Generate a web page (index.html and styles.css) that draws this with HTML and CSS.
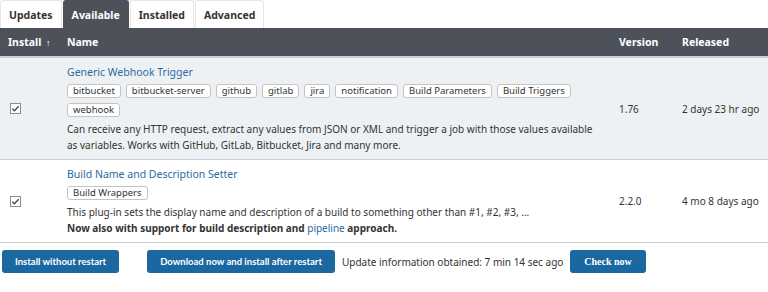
FILE: index.html
```html
<!DOCTYPE html>
<html lang="en">
<head>
    <meta charset="UTF-8">
    <title>Plugin Manager</title>
    <link rel="stylesheet" href="styles.css">
</head>
<body>
    <!-- Tabs -->
    <div class="tabs">
        <div class="tab">Updates</div>
        <div class="tab active">Available</div>
        <div class="tab">Installed</div>
        <div class="tab">Advanced</div>
    </div>

    <!-- Plugin table -->
    <table class="plugins">
        <thead>
            <tr>
                <th class="col-install">Install <span class="arrow">&#8593;</span></th>
                <th class="col-name">Name</th>
                <th class="col-version">Version</th>
                <th class="col-released">Released</th>
            </tr>
        </thead>
        <tbody>
            <tr class="row-alt">
                <td class="col-install">
                    <svg class="check" width="11" height="11" viewBox="0 0 11 11">
                        <rect x="0.5" y="0.5" width="10" height="10" fill="#fff" stroke="#8a8f96"/>
                        <path d="M2.3 5.6 L4.4 7.8 L8.7 3.2" fill="none" stroke="#444" stroke-width="1.3"/>
                    </svg>
                </td>
                <td class="col-name">
                    <a class="title">Generic Webhook Trigger</a>
                    <div class="tags">
                        <span class="tag">bitbucket</span>
                        <span class="tag">bitbucket-server</span>
                        <span class="tag">github</span>
                        <span class="tag">gitlab</span>
                        <span class="tag">jira</span>
                        <span class="tag">notification</span>
                        <span class="tag">Build Parameters</span>
                        <span class="tag">Build Triggers</span>
                        <span class="tag">webhook</span>
                    </div>
                    <div class="desc">Can receive any HTTP request, extract any values from JSON or XML and trigger a job with those values available as variables. Works with GitHub, GitLab, Bitbucket, Jira and many more.</div>
                </td>
                <td class="col-version">1.76</td>
                <td class="col-released">2 days 23 hr ago</td>
            </tr>
            <tr>
                <td class="col-install">
                    <svg class="check" width="11" height="11" viewBox="0 0 11 11">
                        <rect x="0.5" y="0.5" width="10" height="10" fill="#fff" stroke="#8a8f96"/>
                        <path d="M2.3 5.6 L4.4 7.8 L8.7 3.2" fill="none" stroke="#444" stroke-width="1.3"/>
                    </svg>
                </td>
                <td class="col-name">
                    <a class="title">Build Name and Description Setter</a>
                    <div class="tags">
                        <span class="tag">Build Wrappers</span>
                    </div>
                    <div class="desc">This plug-in sets the display name and description of a build to something other than #1, #2, #3, ...<br>
                        <b>Now also with support for build description and <a class="link">pipeline</a> approach.</b></div>
                </td>
                <td class="col-version">2.2.0</td>
                <td class="col-released">4 mo 8 days ago</td>
            </tr>
        </tbody>
    </table>

    <!-- Actions -->
    <div class="actions">
        <button class="btn">Install without restart</button>
        <button class="btn btn-wide">Download now and install after restart</button>
        <span class="info">Update information obtained: 7 min 14 sec ago</span>
        <button class="btn btn-check">Check now</button>
    </div>
</body>
</html>
```

FILE: styles.css
```css
/* General */
body {
    margin: 0;
    font-family: 'Noto Sans', sans-serif;
    font-size: 10px;
    color: #333;
    background: #fff;
}

/* Tabs */
.tabs {
    display: flex;
    gap: 1px;
    height: 28px;
}

.tab {
    display: flex;
    align-items: center;
    padding: 0 8px;
    font-weight: bold;
    font-size: 10.5px;
    color: #333;
    border: 1px solid #e6e6e6;
    border-bottom: none;
    border-radius: 3px 3px 0 0;
}

.tab.active {
    background: #4d525a;
    border-color: #4d525a;
    color: #fff;
}

/* Table */
.plugins {
    width: 100%;
    border-collapse: collapse;
}

.plugins th {
    height: 28px;
    padding: 0;
    background: #4d525a;
    color: #fff;
    font-size: 10.5px;
    text-align: left;
    border-bottom: 2px solid #c8ced4;
}

.plugins th .arrow {
    font-weight: normal;
    font-size: 9px;
    margin-left: 2px;
}

.plugins td {
    padding: 0;
    vertical-align: middle;
    border-bottom: 1px solid #c8ccd0;
}

.row-alt td {
    background: #eef1f4;
}

.plugins .col-install {
    width: 59px;
    padding-left: 8px;
}

.col-install .check {
    display: block;
    margin-left: 2px;
}

td.col-name {
    padding: 7px 0 6px;
}

.col-version {
    width: 63px;
}

.col-released {
    width: 86px;
}

.title {
    display: block;
    color: #2c6aa0;
    font-size: 10.5px;
    line-height: 14px;
    margin-bottom: 5px;
}

.tags {
    display: flex;
    flex-wrap: wrap;
    gap: 5px 5px;
    max-width: 510px;
    margin-bottom: 4px;
}

.tag {
    display: inline-block;
    padding: 0 5px;
    line-height: 12px;
    font-size: 9.5px;
    background: #fff;
    border: 1px solid #c4c4c4;
    border-radius: 3px;
}

.desc {
    line-height: 16px;
    padding-right: 20px;
}

.link {
    color: #2c6aa0;
    font-weight: normal;
}

/* Actions */
.actions {
    display: flex;
    align-items: center;
    padding: 7px 2px;
}

.btn {
    height: 23px;
    padding: 0 13px;
    background: #1b67a0;
    color: #fff;
    border: none;
    border-radius: 3px;
    font-family: 'Lato', sans-serif;
    font-weight: bold;
    font-size: 9.5px;
}

.btn-wide {
    margin-left: 28px;
}

.info {
    margin: 0 7px;
}

.btn-check {
    font-family: 'Liberation Serif', serif;
    font-size: 10px;
    padding: 0 14px;
}
```
